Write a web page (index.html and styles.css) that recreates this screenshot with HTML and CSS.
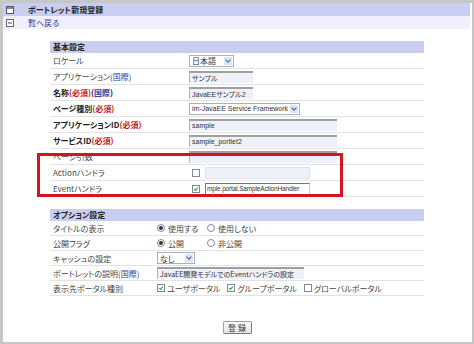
FILE: index.html
```html
<!DOCTYPE html>
<html lang="ja">
<head>
 <meta charset="UTF-8">
 <title>ポートレット新規登録</title>
 <link rel="stylesheet" href="styles.css">
</head>
<body>
 <div class="frame">
 <div class="title-bar">
 <svg class="bar-icon" viewBox="0 0 8 8">
 <rect x="0.5" y="0.5" width="7" height="7" fill="#fff" stroke="#556"/>
 <rect x="1" y="1" width="6" height="2" fill="#889"/>
 </svg>
 <span class="title-text">ポートレット新規登録</span>
 </div>
 <div class="sub-bar">
 <svg class="bar-icon" viewBox="0 0 8 8">
 <rect x="0.5" y="0.5" width="7" height="7" fill="#fff" stroke="#667"/>
 <rect x="2" y="3.5" width="4" height="1" fill="#556"/>
 </svg>
 <a class="back-link" href="#">覧へ戻る</a>
 </div>

 <div class="content">
 <div class="form-table basic">
 <div class="head">基本設定</div>
 <div class="row">
 <span class="label">ロケール</span>
 <span class="select w-locale"><span class="sel-text">日本語</span><span class="arrow"></span></span>
 </div>
 <div class="row">
 <span class="label">アプリケーション(<span class="intl">国際</span>)</span>
 <span class="field w-short">サンプル</span>
 </div>
 <div class="row">
 <span class="label strong">名称<span class="req">(必須)</span>(<span class="intl">国際</span>)</span>
 <span class="field w-short">JavaEEサンプル2</span>
 </div>
 <div class="row">
 <span class="label strong">ページ種別<span class="req">(必須)</span></span>
 <span class="select w-page"><span class="sel-text">im-JavaEE Service Framework</span><span class="arrow"></span></span>
 </div>
 <div class="row">
 <span class="label strong">アプリケーションID<span class="req">(必須)</span></span>
 <span class="field w-long">sample</span>
 </div>
 <div class="row">
 <span class="label strong">サービスID<span class="req">(必須)</span></span>
 <span class="field w-long">sample_portlet2</span>
 </div>
 <div class="row">
 <span class="label">ページ引数</span>
 <span class="field w-long"></span>
 </div>
 <div class="row">
 <span class="label">Actionハンドラ</span>
 <span class="check"></span>
 <span class="field w-handler disabled"></span>
 </div>
 <div class="row">
 <span class="label">Eventハンドラ</span>
 <span class="check on"><svg viewBox="0 0 8 8"><polyline points="1.5 4 3.3 5.8 6.5 2" fill="none" stroke="#2a9a2a" stroke-width="1.4"/></svg></span>
 <span class="field w-handler active">mple.portal.SampleActionHandler</span>
 </div>
 </div>

 <div class="form-table option">
 <div class="head">オプション設定</div>
 <div class="row">
 <span class="label">タイトルの表示</span>
 <span class="choice"><span class="radio on"></span>使用する</span>
 <span class="choice"><span class="radio"></span>使用しない</span>
 </div>
 <div class="row">
 <span class="label">公開フラグ</span>
 <span class="choice"><span class="radio on"></span>公開</span>
 <span class="choice"><span class="radio"></span>非公開</span>
 </div>
 <div class="row">
 <span class="label">キャッシュの設定</span>
 <span class="select w-cache"><span class="sel-text">なし</span><span class="arrow"></span></span>
 </div>
 <div class="row">
 <span class="label">ポートレットの説明(<span class="intl">国際</span>)</span>
 <span class="field w-desc">JavaEE開発モデルでのEventハンドラの設定</span>
 </div>
 <div class="row">
 <span class="label">表示先ポータル種別</span>
 <span class="choice box"><span class="check on"><svg viewBox="0 0 8 8"><polyline points="1.5 4 3.3 5.8 6.5 2" fill="none" stroke="#2a9a2a" stroke-width="1.4"/></svg></span>ユーザポータル</span>
 <span class="choice box"><span class="check on"><svg viewBox="0 0 8 8"><polyline points="1.5 4 3.3 5.8 6.5 2" fill="none" stroke="#2a9a2a" stroke-width="1.4"/></svg></span>グループポータル</span>
 <span class="choice box"><span class="check"></span>グローバルポータル</span>
 </div>
 </div>

 <div class="actions">
 <button class="button" type="button">登 録</button>
 </div>
 </div>

 <div class="highlight"></div>
 </div>
</body>
</html>
```

FILE: styles.css
```css
* {
 margin: 0;
 padding: 0;
 box-sizing: border-box;
}
body {
 background: #c6c6c6;
 padding: 3px 2px 2px 3px;
 font-family: "Noto Sans CJK JP", sans-serif;
 font-size: 8px;
 font-feature-settings: "palt";
 color: #444;
}
.frame {
 position: relative;
 background: #fff;
 height: 339px;
 padding-right: 2px;
}
.title-bar,
.sub-bar {
 display: flex;
 align-items: center;
 height: 13px;
 padding-left: 3px;
}
.title-bar {
 background: #c9cdef;
}
.sub-bar {
 background: #eff0fb;
}
.bar-icon {
 width: 8px;
 height: 8px;
 margin-right: 14px;
}
.title-text {
 font-weight: bold;
 color: #222;
}
.back-link {
 color: #3140a8;
 text-decoration: none;
}
.content {
 padding: 12px 0 0 47px;
}
.form-table {
 width: 374px;
}
.form-table.option {
 margin-top: 12px;
}
.head {
 height: 12px;
 line-height: 12px;
 background: #c9cdef;
 padding-left: 3px;
 font-weight: bold;
 color: #222;
}
.row {
 display: flex;
 align-items: center;
 height: 16px;
 border-bottom: 1px solid #e2e2e2;
}
.option .row {
 height: 15px;
}
.label {
 flex: none;
 width: 139px;
 padding-left: 3px;
 white-space: nowrap;
}
.option .label {
 width: 107px;
}
.label.strong {
 font-weight: bold;
 color: #222;
}
.req {
 color: #cc1111;
}
.intl {
 color: #3140a8;
}
.field {
 display: flex;
 align-items: center;
 height: 12px;
 padding: 0 2px;
 background: #eef1f9;
 border-top: 2px solid #a0a0a0;
 border-left: 1px solid #b4b4b4;
 color: #333;
 font-family: "Liberation Sans", "Noto Sans CJK JP", sans-serif;
 font-size: 7px;
 white-space: nowrap;
 overflow: hidden;
}
.option .field {
 font-family: "Noto Sans CJK JP", sans-serif;
}
.w-short {
 width: 64px;
}
.w-long {
 width: 148px;
}
.w-desc {
 width: 147px;
}
.w-handler {
 width: 105px;
 margin-left: 5px;
}
.field.disabled {
 border: 1px solid #dde2ee;
}
.field.active {
 background: #fff;
 border: 1px solid #c8c8c8;
 border-top: 1px solid #777;
 border-left: 1px solid #777;
 padding: 0 1px;
 font-size: 6.5px;
 letter-spacing: -0.15px;
}
.select {
 display: flex;
 align-items: center;
 height: 12px;
 border: 1px solid #a7afc0;
 background: #fff;
 color: #333;
 white-space: nowrap;
 overflow: hidden;
}
.sel-text {
 flex: 1;
 padding-left: 2px;
 overflow: hidden;
}
.w-locale {
 width: 45px;
}
.w-page {
 width: 111px;
 font-family: "Liberation Sans", sans-serif;
 font-size: 7px;
}
.w-cache {
 width: 38px;
}
.arrow {
 position: relative;
 flex: none;
 width: 10px;
 height: 10px;
 background: #dbe4f8;
 border: 1px solid #fff;
}
.arrow::after {
 content: "";
 position: absolute;
 left: 2px;
 top: 1px;
 width: 3px;
 height: 3px;
 border-right: 1.5px solid #4d6185;
 border-bottom: 1.5px solid #4d6185;
 transform: rotate(45deg);
}
.check {
 display: inline-flex;
 flex: none;
 width: 8px;
 height: 8px;
 margin-left: 3px;
 border: 1px solid #7c8a99;
 background: #fff;
}
.check svg {
 width: 100%;
 height: 100%;
}
.choice {
 display: inline-flex;
 align-items: center;
 width: 50px;
 white-space: nowrap;
 color: #444;
}
.radio {
 display: inline-flex;
 align-items: center;
 justify-content: center;
 width: 8px;
 height: 8px;
 margin-right: 3px;
 border: 1px solid #7c8a99;
 border-radius: 50%;
}
.radio.on::after {
 content: "";
 width: 4px;
 height: 4px;
 border-radius: 50%;
 background: #333;
}
.choice.box {
 width: auto;
 margin-right: 7px;
}
.choice.box .check {
 margin-left: 0;
 margin-right: 2px;
}
.actions {
 display: flex;
 justify-content: center;
 width: 374px;
 margin-top: 25px;
}
.button {
 width: 29px;
 height: 13px;
 font-family: "Noto Sans CJK JP", sans-serif;
 font-size: 8px;
 color: #333;
 background: linear-gradient(#fafafa, #e6e6e6);
 border: 1px solid #a0a0a0;
 border-right-color: #777;
 border-bottom-color: #777;
 border-radius: 2px;
}
.highlight {
 position: absolute;
 left: 34px;
 top: 150px;
 width: 306px;
 height: 44px;
 border: 3px solid #d5141d;
}
```
